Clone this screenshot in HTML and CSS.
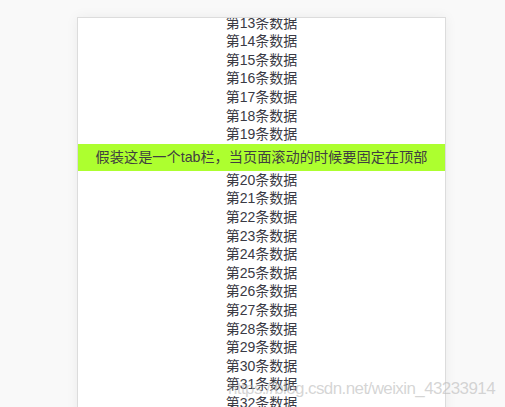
FILE: index.html
```html
<!DOCTYPE html>
<html lang="zh-CN">
<head>
<meta charset="utf-8">
<title>tab</title>
<link rel="stylesheet" href="styles.css">
</head>
<body>
<div class="panel">
  <div class="list">
    <div class="row">第13条数据</div>
    <div class="row">第14条数据</div>
    <div class="row">第15条数据</div>
    <div class="row">第16条数据</div>
    <div class="row">第17条数据</div>
    <div class="row">第18条数据</div>
    <div class="row">第19条数据</div>
    <div class="tab">假装这是一个tab栏，当页面滚动的时候要固定在顶部</div>
    <div class="row">第20条数据</div>
    <div class="row">第21条数据</div>
    <div class="row">第22条数据</div>
    <div class="row">第23条数据</div>
    <div class="row">第24条数据</div>
    <div class="row">第25条数据</div>
    <div class="row">第26条数据</div>
    <div class="row">第27条数据</div>
    <div class="row">第28条数据</div>
    <div class="row">第29条数据</div>
    <div class="row">第30条数据</div>
    <div class="row">第31条数据</div>
    <div class="row">第32条数据</div>
    <div class="row">第33条数据</div>
  </div>
</div>
<div class="watermark">https://blog.csdn.net/weixin_43233914</div>
</body>
</html>
```
FILE: styles.css
```css
html, body {
  margin: 0;
  padding: 0;
  height: 100%;
  overflow: hidden;
}
body {
  background: #f9f9f9;
  font-family: "Liberation Sans", "Noto Sans CJK SC", sans-serif;
  font-size: 14px;
  color: #3a3a44;
  position: relative;
}
.panel {
  margin: 17px 0 0 77px;
  width: 367px;
  height: 420px;
  background: #fff;
  border: 1px solid #dcdcdc;
  box-shadow: 0 0 12px rgba(0, 0, 0, 0.06);
  overflow: hidden;
}
.list {
  margin-top: -4.4px;
}
.row {
  height: 18.6px;
  line-height: 18.6px;
  text-align: center;
}
.tab {
  height: 27px;
  line-height: 27px;
  background: #adff2f;
  text-align: center;
  color: #404040;
  font-size: 14.2px;
}
.watermark {
  position: absolute;
  right: 10px;
  top: 379px;
  font-size: 17px;
  letter-spacing: -0.6px;
  color: rgba(185, 185, 185, 0.6);
  white-space: nowrap;
}
```
